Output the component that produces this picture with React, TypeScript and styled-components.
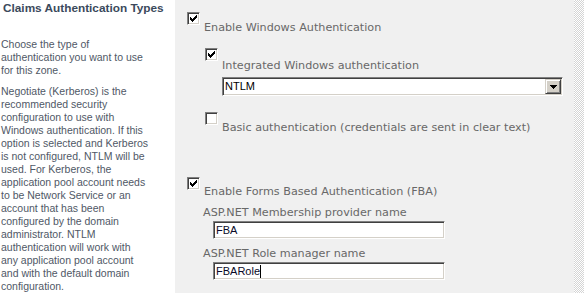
import React from 'react';
import styled, { createGlobalStyle } from 'styled-components';

const GlobalStyle = createGlobalStyle`
  html, body {
    margin: 0;
    padding: 0;
    background: #fff;
  }
  body {
    width: 584px;
    height: 293px;
    overflow: hidden;
  }
`;

const Page = styled.div`
  display: flex;
  width: 584px;
  height: 293px;
`;

const Description = styled.div`
  flex: none;
  width: 175px;
  box-sizing: border-box;
  padding: 1px 0 0 1px;
  background: #fff;
  font-family: 'Liberation Sans', Arial, sans-serif;
  color: #4f5866;
`;

const SectionTitle = styled.h3`
  margin: 0 0 0 2px;
  font-size: 11.8px;
  line-height: 14px;
  font-weight: bold;
  color: #3b4a5c;
`;

const Para = styled.p<{ $gap: number }>`
  margin: ${(p) => p.$gap}px 0 0;
  font-size: 10.5px;
  line-height: 13px;
  white-space: nowrap;
`;

const Panel = styled.div`
  flex: 1;
  display: flex;
  background: #f0f0f0;
`;

const Fields = styled.div`
  flex: 1;
  padding-left: 12px;
  font-family: 'DejaVu Sans', Verdana, sans-serif;
  font-size: 11.2px;
  line-height: 13px;
  color: #686868;
`;

const Hatch = styled.div`
  flex: none;
  width: 10px;
  background-color: #fff;
  background-image: conic-gradient(#d4d4d4 25%, transparent 0 50%, #d4d4d4 0 75%, transparent 0);
  background-size: 2px 2px;
`;

const Indent = styled.div`
  padding-left: 18px;
`;

const CheckRow = styled.div<{ $top: number }>`
  display: flex;
  align-items: flex-start;
  margin-top: ${(p) => p.$top}px;
`;

const Box = styled.span`
  flex: none;
  display: block;
  width: 13px;
  height: 13px;
  box-sizing: border-box;
  background: #fff;
  border: 1px solid;
  border-color: #808080 #fff #fff #808080;
  box-shadow: inset 1px 1px 0 #404040, inset -1px -1px 0 #d4d0c8;
  svg {
    display: block;
    margin: 2px 0 0 2px;
  }
`;

const CheckLabel = styled.span<{ $drop: number }>`
  margin: ${(p) => p.$drop}px 0 0 4px;
  white-space: nowrap;
`;

const Select = styled.div`
  display: flex;
  align-items: center;
  justify-content: space-between;
  width: 341px;
  height: 19px;
  box-sizing: border-box;
  margin: 5px 0 0 17px;
  padding: 1px 1px 1px 2px;
  background: #fff;
  border: 1px solid;
  border-color: #808080 #fff #fff #808080;
  box-shadow: inset 1px 1px 0 #404040, inset -1px -1px 0 #d4d0c8;
  font-family: 'Liberation Sans', Arial, sans-serif;
  font-size: 11px;
  line-height: 13px;
  color: #000;
`;

const DropButton = styled.span`
  display: flex;
  align-items: center;
  justify-content: center;
  width: 16px;
  height: 15px;
  box-sizing: border-box;
  background: #d4d0c8;
  border: 1px solid;
  border-color: #d4d0c8 #404040 #404040 #d4d0c8;
  box-shadow: inset 1px 1px 0 #fff, inset -1px -1px 0 #808080;
`;

const FieldLabel = styled.div`
  margin-top: 8px;
  padding-left: 16px;
  white-space: nowrap;
`;

const TextBox = styled.div`
  display: flex;
  align-items: center;
  width: 232px;
  height: 18px;
  box-sizing: border-box;
  margin: 2px 0 0 26px;
  padding: 0 2px;
  background: #fff;
  border: 1px solid;
  border-color: #808080 #fff #fff #808080;
  box-shadow: inset 1px 1px 0 #404040, inset -1px -1px 0 #d4d0c8;
  font-family: 'Liberation Sans', Arial, sans-serif;
  font-size: 11px;
  line-height: 13px;
  color: #0a0a28;
`;

const Caret = styled.span`
  display: inline-block;
  width: 1px;
  height: 13px;
  background: #000;
`;

const Check = () => (
  <svg width="7" height="7" viewBox="0 0 7 7" shapeRendering="crispEdges">
    <path
      fill="#000"
      d="M6 0h1v1h-1z M5 1h2v1h-2z M0 2h1v1h-1z M4 2h3v1h-3z M0 3h2v1h-2z M3 3h3v1h-3z M0 4h5v1h-5z M1 5h3v1h-3z M2 6h1v1h-1z"
    />
  </svg>
);

const CheckItem: React.FC<{ checked?: boolean; top: number; drop: number; label: string }> = ({
  checked,
  top,
  drop,
  label,
}) => (
  <CheckRow $top={top}>
    <Box>{checked && <Check />}</Box>
    <CheckLabel $drop={drop}>{label}</CheckLabel>
  </CheckRow>
);

const App: React.FC = () => (
  <>
    <GlobalStyle />
    <Page>
      <Description>
        <SectionTitle>Claims Authentication Types</SectionTitle>
        <Para $gap={23}>
          Choose the type of
          <br />
          authentication you want to use
          <br />
          for this zone.
        </Para>
        <Para $gap={8}>
          Negotiate (Kerberos) is the
          <br />
          recommended security
          <br />
          configuration to use with
          <br />
          Windows authentication. If this
          <br />
          option is selected and Kerberos
          <br />
          is not configured, NTLM will be
          <br />
          used. For Kerberos, the
          <br />
          application pool account needs
          <br />
          to be Network Service or an
          <br />
          account that has been
          <br />
          configured by the domain
          <br />
          administrator. NTLM
          <br />
          authentication will work with
          <br />
          any application pool account
          <br />
          and with the default domain
          <br />
          configuration.
        </Para>
      </Description>
      <Panel>
        <Fields>
          <CheckItem checked top={12} drop={9} label="Enable Windows Authentication" />
          <Indent>
            <CheckItem checked top={14} drop={11} label="Integrated Windows authentication" />
            <Select>
              <span>NTLM</span>
              <DropButton>
                <svg width="7" height="4" viewBox="0 0 7 4" shapeRendering="crispEdges">
                  <path fill="#000" d="M0 0h7v1h-7z M1 1h5v1h-5z M2 2h3v1h-3z M3 3h1v1h-1z" />
                </svg>
              </DropButton>
            </Select>
            <CheckItem top={16} drop={9} label="Basic authentication (credentials are sent in clear text)" />
          </Indent>
          <CheckItem checked top={43} drop={8} label="Enable Forms Based Authentication (FBA)" />
          <FieldLabel>ASP.NET Membership provider name</FieldLabel>
          <TextBox>FBA</TextBox>
          <FieldLabel>ASP.NET Role manager name</FieldLabel>
          <TextBox>
            FBARole
            <Caret />
          </TextBox>
        </Fields>
        <Hatch />
      </Panel>
    </Page>
  </>
);

export default App;
